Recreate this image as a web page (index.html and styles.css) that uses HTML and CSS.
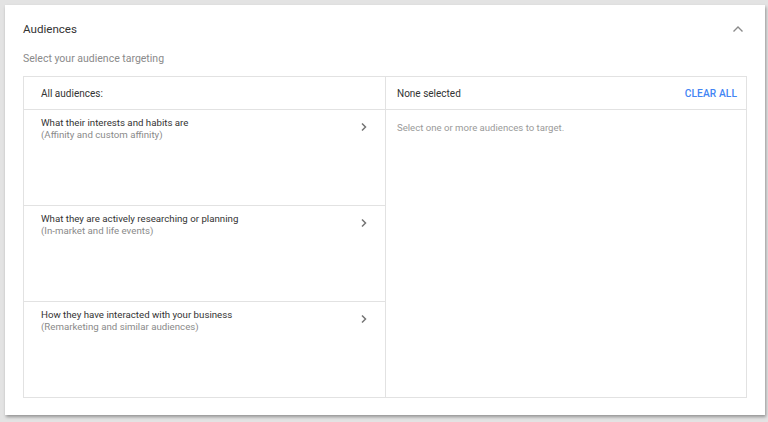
FILE: index.html
```html
<!DOCTYPE html>
<html>
<head>
<meta charset="utf-8">
<link rel="stylesheet" href="styles.css">
</head>
<body>
<div class="card">
  <div class="card-head">
    <h2 class="title">Audiences</h2>
    <svg class="collapse" width="12" height="8" viewBox="0 0 12 8"><path d="M1.5 6.5 L6 2 L10.5 6.5" fill="none" stroke="#8a8a8a" stroke-width="1.4"/></svg>
  </div>
  <div class="subtitle">Select your audience targeting</div>
  <div class="picker">
    <div class="col left">
      <div class="col-head">All audiences:</div>
      <div class="item">
        <div class="item-text">
          <div class="item-title">What their interests and habits are</div>
          <div class="item-sub">(Affinity and custom affinity)</div>
        </div>
        <svg class="chev" width="8" height="10" viewBox="0 0 8 10"><path d="M2 1.5 L5.5 5 L2 8.5" fill="none" stroke="#757575" stroke-width="1.5"/></svg>
      </div>
      <div class="item">
        <div class="item-text">
          <div class="item-title">What they are actively researching or planning</div>
          <div class="item-sub">(In-market and life events)</div>
        </div>
        <svg class="chev" width="8" height="10" viewBox="0 0 8 10"><path d="M2 1.5 L5.5 5 L2 8.5" fill="none" stroke="#757575" stroke-width="1.5"/></svg>
      </div>
      <div class="item">
        <div class="item-text">
          <div class="item-title">How they have interacted with your business</div>
          <div class="item-sub">(Remarketing and similar audiences)</div>
        </div>
        <svg class="chev" width="8" height="10" viewBox="0 0 8 10"><path d="M2 1.5 L5.5 5 L2 8.5" fill="none" stroke="#757575" stroke-width="1.5"/></svg>
      </div>
    </div>
    <div class="col right">
      <div class="col-head split">
        <span>None selected</span>
        <span class="clear">CLEAR ALL</span>
      </div>
      <div class="empty">Select one or more audiences to target.</div>
    </div>
  </div>
</div>
</body>
</html>
```
FILE: styles.css
```css
html, body {
  margin: 0;
  padding: 0;
  background: #e3e3e3;
  font-family: Roboto, "Liberation Sans", Arial, sans-serif;
}
body {
  padding: 5px 3px 0 5px;
  height: 422px;
  box-sizing: border-box;
  overflow: hidden;
}
.card {
  background: #fff;
  width: 760px;
  height: 410px;
  box-sizing: border-box;
  padding: 0 18px 0 18px;
  box-shadow: 1px 2px 3px rgba(0,0,0,0.35);
  display: flex;
  flex-direction: column;
}
.card-head {
  height: 36px;
  padding-top: 11px;
  box-sizing: border-box;
  display: flex;
  align-items: center;
  justify-content: space-between;
}
.title {
  margin: 0;
  font-size: 11.6px;
  font-weight: 400;
  color: #333;
}
.collapse {
  margin-right: 3px;
}
.subtitle {
  font-size: 10.5px;
  color: #8a8a8a;
  height: 35px;
  display: flex;
  align-items: center;
  padding-bottom: 10px;
  box-sizing: border-box;
  padding-top: 9px;
}
.picker {
  height: 322px;
  border: 1px solid #e2e2e2;
  display: flex;
  box-sizing: border-box;
}
.col {
  display: flex;
  flex-direction: column;
}
.left {
  width: 361px;
  border-right: 1px solid #e2e2e2;
}
.right {
  flex: 1;
}
.col-head {
  height: 32px;
  border-bottom: 1px solid #e2e2e2;
  display: flex;
  align-items: center;
  padding: 0 10px 0 17px;
  font-size: 10px;
  color: #333;
  flex-shrink: 0;
}
.split {
  justify-content: space-between;
  padding-left: 11px;
  padding-right: 9px;
}
.clear {
  color: #4285f4;
  font-weight: 500;
  font-size: 10.2px;
  letter-spacing: 0.1px;
}
.item {
  flex: 1;
  display: flex;
  justify-content: space-between;
  align-items: flex-start;
  padding: 7px 17px 0 17px;
  border-bottom: 1px solid #e2e2e2;
}
.item:last-child {
  border-bottom: none;
}
.item-title {
  font-size: 9.7px;
  color: #333;
  line-height: 12px;
}
.item-sub {
  font-size: 9.7px;
  color: #8a8a8a;
  line-height: 11px;
}
.chev {
  margin-top: 5px;
}
.empty {
  padding: 12px 11px;
  font-size: 9.6px;
  color: #9a9a9a;
}
```
